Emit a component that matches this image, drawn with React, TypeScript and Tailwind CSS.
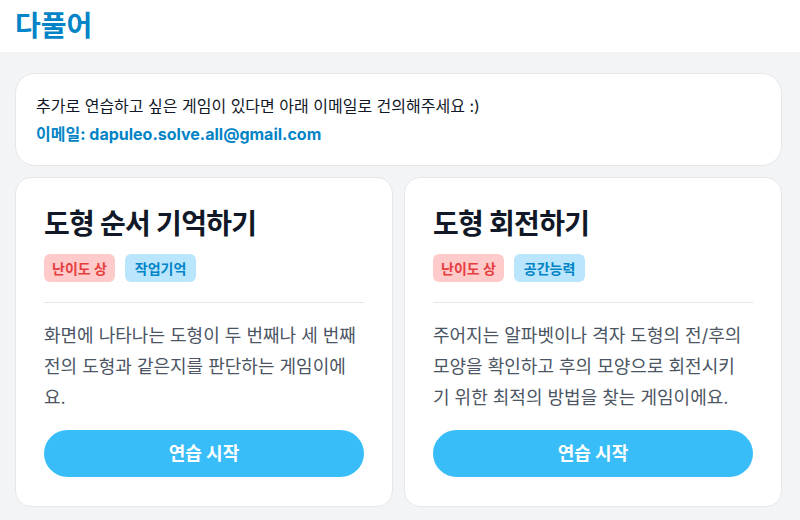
import React from "react";

type Game = {
  title: string;
  level: string;
  skill: string;
  description: string;
};

const games: Game[] = [
  {
    title: "도형 순서 기억하기",
    level: "난이도 상",
    skill: "작업기억",
    description:
      "화면에 나타나는 도형이 두 번째나 세 번째 전의 도형과 같은지를 판단하는 게임이에요.",
  },
  {
    title: "도형 회전하기",
    level: "난이도 상",
    skill: "공간능력",
    description:
      "주어지는 알파벳이나 격자 도형의 전/후의 모양을 확인하고 후의 모양으로 회전시키기 위한 최적의 방법을 찾는 게임이에요.",
  },
];

const GameCard: React.FC<{ game: Game }> = ({ game }) => {
  return (
    <div className="flex flex-col rounded-2xl border border-gray-200 bg-white px-7 pt-7 pb-[29px]">
      <h2 className="text-[28px] font-bold leading-[36px] tracking-tight text-[#111827]">
        {game.title}
      </h2>
      <div className="mt-3 flex gap-[10px]">
        <span className="flex h-7 items-center rounded-md bg-[#fecaca] px-2 text-[14px] font-bold text-[#e53e3e]">
          {game.level}
        </span>
        <span className="flex h-7 items-center rounded-md bg-[#bae6fd] px-[10px] text-[14px] font-bold text-[#0284c7]">
          {game.skill}
        </span>
      </div>
      <div className="mt-5 border-t border-gray-200" />
      <p className="mt-[17px] pr-[2px] text-[18px] leading-[31px] text-[#4b5563]">
        {game.description}
      </p>
      <button className="mt-[17px] h-[47px] w-full rounded-full bg-[#38bdf8] text-[18px] font-bold text-white">
        연습 시작
      </button>
    </div>
  );
};

const App: React.FC = () => {
  return (
    <div
      className="min-h-[520px] bg-gray-100"
      style={{ fontFamily: 'Inter, "Noto Sans CJK KR", sans-serif' }}
    >
      <header className="flex h-[52px] items-center bg-white px-[15px]">
        <h1 className="text-[28px] font-bold text-[#0284c7]">다풀어</h1>
      </header>
      <main className="flex flex-col gap-[11px] pt-[21px] pl-[15px] pr-[18px]">
        <div className="rounded-[20px] border border-gray-200 bg-white px-5 pt-5 pb-[19px]">
          <p className="text-[16px] leading-6 text-[#111827]">
            추가로 연습하고 싶은 게임이 있다면 아래 이메일로 건의해주세요 :)
          </p>
          <p className="mt-1 text-[16px] font-bold leading-6 text-[#0284c7]">
            이메일: dapuleo.solve.all@gmail.com
          </p>
        </div>
        <div className="grid grid-cols-2 gap-[11px]">
          {games.map((game) => (
            <GameCard key={game.title} game={game} />
          ))}
        </div>
      </main>
    </div>
  );
};

export default App;
